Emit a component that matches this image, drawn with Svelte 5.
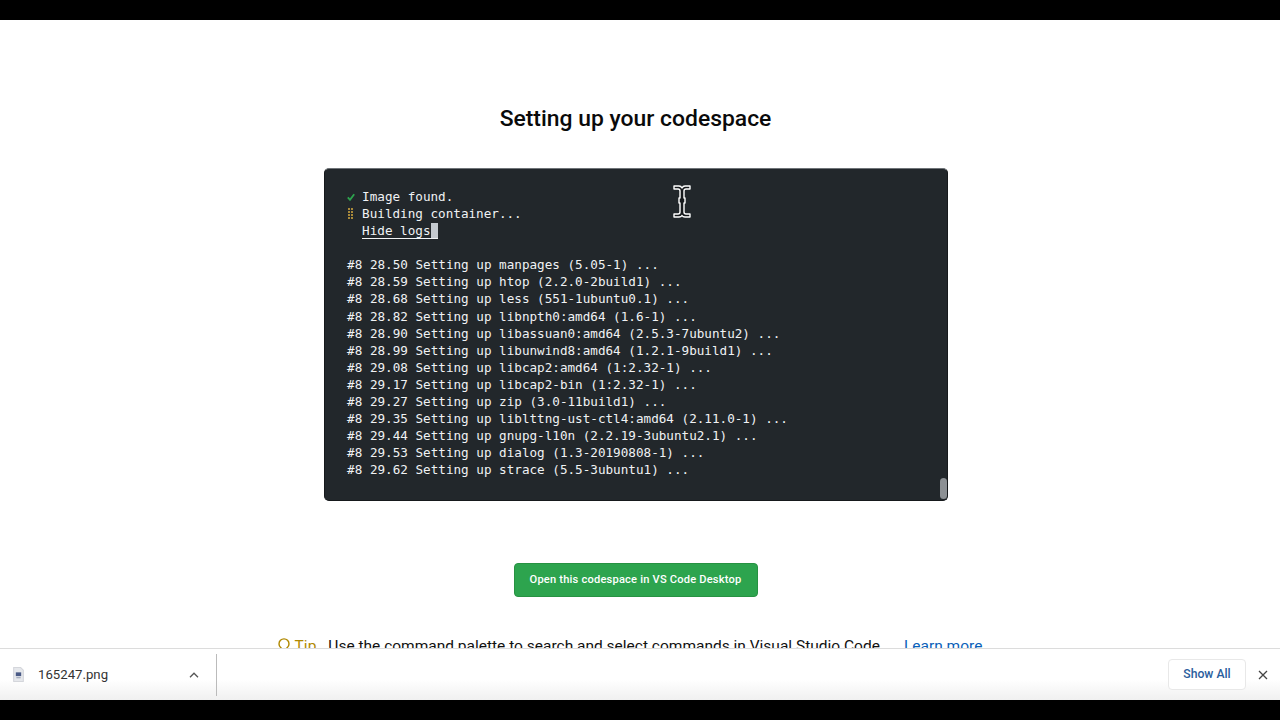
<script>
	const logs = [
		'#8 28.50 Setting up manpages (5.05-1) ...',
		'#8 28.59 Setting up htop (2.2.0-2build1) ...',
		'#8 28.68 Setting up less (551-1ubuntu0.1) ...',
		'#8 28.82 Setting up libnpth0:amd64 (1.6-1) ...',
		'#8 28.90 Setting up libassuan0:amd64 (2.5.3-7ubuntu2) ...',
		'#8 28.99 Setting up libunwind8:amd64 (1.2.1-9build1) ...',
		'#8 29.08 Setting up libcap2:amd64 (1:2.32-1) ...',
		'#8 29.17 Setting up libcap2-bin (1:2.32-1) ...',
		'#8 29.27 Setting up zip (3.0-11build1) ...',
		'#8 29.35 Setting up liblttng-ust-ctl4:amd64 (2.11.0-1) ...',
		'#8 29.44 Setting up gnupg-l10n (2.2.19-3ubuntu2.1) ...',
		'#8 29.53 Setting up dialog (1.3-20190808-1) ...',
		'#8 29.62 Setting up strace (5.5-3ubuntu1) ...'
	];
</script>

<div class="screen">
	<div class="letterbox"></div>

	<main class="page">
		<h1>Setting up your codespace</h1>

		<section class="terminal">
			<div class="status">
				<div class="line">
					<svg class="mark" width="8" height="8" viewBox="0 0 8 8">
						<path d="M0.8 4.4 L3 6.8 L7.2 1.2" fill="none" stroke="#2da44e" stroke-width="1.8" />
					</svg>
					<span>Image found.</span>
				</div>
				<div class="line">
					<svg class="mark" width="8" height="11" viewBox="0 0 8 11">
						<g fill="#a8893a">
							<rect x="1" y="0" width="2" height="2" />
							<rect x="4" y="0" width="2" height="2" />
							<rect x="1" y="3" width="2" height="2" />
							<rect x="4" y="3" width="2" height="2" />
							<rect x="1" y="6" width="2" height="2" />
							<rect x="4" y="6" width="2" height="2" />
							<rect x="1" y="9" width="2" height="2" />
							<rect x="4" y="9" width="2" height="2" />
						</g>
					</svg>
					<span>Building container...</span>
				</div>
				<div class="line">
					<span class="mark"></span>
					<span class="toggle">Hide logs<i class="caret"></i></span>
				</div>
			</div>

			<div class="logs">
				{#each logs as row}
					<div class="line">{row}</div>
				{/each}
			</div>

			<div class="thumb"></div>
		</section>

		<button class="open">Open this codespace in VS Code Desktop</button>

		<p class="tip">
			<svg width="12" height="16" viewBox="0 0 12 16">
				<path
					d="M3.4 10.2 C2 9 1 7.8 1 5.9 A5 5 0 0 1 11 5.9 C11 7.8 10 9 8.6 10.2 V12 H3.4 Z"
					fill="none"
					stroke="#b08800"
					stroke-width="1.4"
				/>
			</svg>
			<span class="tip-label">Tip</span>
			<span class="tip-text">Use the command palette to search and select commands in Visual Studio Code.</span>
			<a href="#learn">Learn more</a>
		</p>

		<svg class="cursor" width="20" height="36" viewBox="0 0 20 36">
			<path
				d="M2 2 H7 C8.5 2 9.5 3 10 4 C10.5 3 11.5 2 13 2 H18 V5 H14 C12.5 5 12 6 12 7 V14 H13 V19 H12 V28 C12 29.5 12.5 30 14 30 H18 V33 H13 C11.5 33 10.5 32.5 10 31.5 C9.5 32.5 8.5 33 7 33 H2 V30 H6 C7.5 30 8 29.5 8 28 V19 H7 V14 H8 V7 C8 6 7.5 5 6 5 H2 Z"
				fill="#16191c"
				stroke="#fff"
				stroke-width="1.4"
				stroke-linejoin="round"
			/>
		</svg>
	</main>

	<footer class="downloads">
		<div class="file">
			<svg width="11" height="15" viewBox="0 0 10 14">
				<path d="M0.5 0.5 H7 L9.5 3 V13.5 H0.5 Z" fill="#e6e8ec" stroke="#d4d6db" />
				<rect x="2.5" y="5" width="5" height="3.5" fill="#4a5a86" />
				<rect x="3" y="9.5" width="4" height="1" fill="#9aa3b5" />
			</svg>
			<span class="file-name">165247.png</span>
			<svg class="chevron" width="10" height="6" viewBox="0 0 10 6">
				<path d="M1 5.2 L5 1.2 L9 5.2" fill="none" stroke="#555" stroke-width="1.3" />
			</svg>
		</div>
		<div class="divider"></div>
		<div class="spacer"></div>
		<button class="show-all">Show All</button>
		<svg class="close" width="10" height="10" viewBox="0 0 10 10">
			<path d="M1 1 L9 9 M9 1 L1 9" fill="none" stroke="#444" stroke-width="1.3" />
		</svg>
	</footer>

	<div class="letterbox"></div>
</div>

<style>
	:global(body) {
		margin: 0;
		background: #000;
	}

	.screen {
		width: 1280px;
		height: 720px;
		display: flex;
		flex-direction: column;
		overflow: hidden;
	}

	.letterbox {
		height: 20px;
		background: #000;
		flex: none;
	}

	.page {
		position: relative;
		height: 628px;
		flex: none;
		background: #fff;
		overflow: hidden;
		padding-right: 9px;
		display: flex;
		flex-direction: column;
		align-items: center;
	}

	h1 {
		margin: 85px 0 0;
		height: 28px;
		flex: none;
		font: 500 22.9px/28px Roboto, "Liberation Sans", sans-serif;
		color: #0a0a0a;
	}

	.terminal {
		position: relative;
		box-sizing: border-box;
		width: 624px;
		height: 333px;
		flex: none;
		margin-top: 35px;
		padding: 19px 22.6px;
		background: #22272b;
		border: 1px solid #16191c;
		border-top-color: #6f7478;
		border-radius: 5px;
		font: 12.63px/17.1px "DejaVu Sans Mono", "Liberation Mono", monospace;
		color: #f0f2f4;
	}

	.line {
		height: 17.1px;
		white-space: nowrap;
	}

	.status .line {
		display: flex;
		align-items: center;
	}

	.mark {
		width: 8px;
		margin-right: 7px;
		flex: none;
	}

	.toggle {
		display: inline-block;
		height: 16px;
		border-bottom: 1px solid #f0f2f4;
	}

	.caret {
		display: inline-block;
		width: 7px;
		height: 15px;
		background: #c4c9cf;
		vertical-align: top;
		margin-top: 1px;
	}

	.logs {
		margin-top: 17px;
	}

	.thumb {
		position: absolute;
		right: 0;
		bottom: 1px;
		width: 7px;
		height: 21px;
		border-radius: 4px;
		background: #8c9094;
	}

	.open {
		margin-top: 62px;
		width: 244px;
		height: 34px;
		flex: none;
		padding: 0;
		background: #2da44e;
		border: 1px solid #279242;
		border-radius: 4px;
		color: #fff;
		font: 500 11.1px/32px Roboto, "Liberation Sans", sans-serif;
		letter-spacing: 0.2px;
	}

	.tip {
		margin: 39px 11px 0 0;
		display: flex;
		align-items: center;
		height: 20px;
		flex: none;
		white-space: nowrap;
		font: 15.5px/20px Roboto, "Liberation Sans", sans-serif;
		color: #111;
	}

	.tip-label {
		color: #b08800;
		margin: 0 12px 0 5px;
	}

	.tip a {
		color: #0a5fb8;
		text-decoration: none;
		margin-left: 20px;
	}

	.cursor {
		position: absolute;
		left: 672px;
		top: 164px;
	}

	.downloads {
		height: 52px;
		flex: none;
		box-sizing: border-box;
		display: flex;
		align-items: center;
		border-top: 1px solid #dcdcdc;
		background: linear-gradient(#fff 60%, #f0f0f0);
		font-family: Roboto, "Liberation Sans", sans-serif;
	}

	.file {
		width: 216px;
		box-sizing: border-box;
		padding-left: 13px;
		display: flex;
		align-items: center;
		flex: none;
	}

	.file-name {
		margin-left: 14px;
		font-size: 13.2px;
		color: #333;
	}

	.chevron {
		margin-left: auto;
		margin-right: 17px;
	}

	.divider {
		width: 1px;
		height: 42px;
		background: #bbb;
		flex: none;
	}

	.spacer {
		flex: 1;
	}

	.show-all {
		width: 78px;
		height: 31px;
		padding: 0;
		background: #fff;
		border: 1px solid #e8e8e8;
		border-radius: 4px;
		color: #2a5d9c;
		font: 500 12.2px/29px Roboto, "Liberation Sans", sans-serif;
	}

	.close {
		margin: 0 12px 0 12px;
	}
</style>
